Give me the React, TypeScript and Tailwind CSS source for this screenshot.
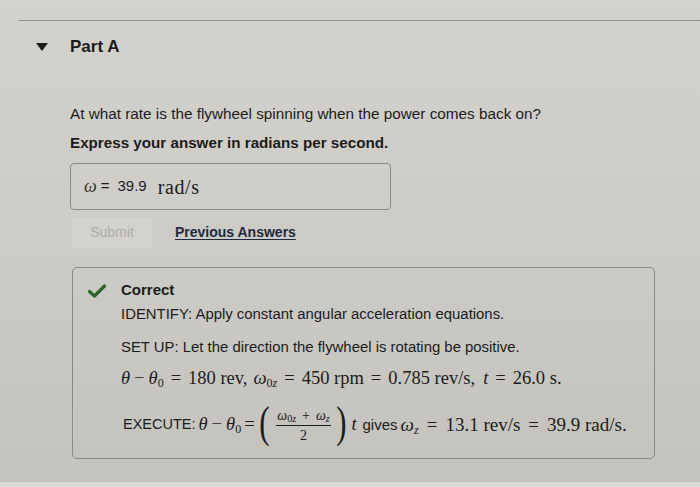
import React from "react";

const sans = { fontFamily: '"Liberation Sans", Arial, sans-serif' };
const serif = { fontFamily: '"Liberation Serif", "DejaVu Serif", serif' };

function M({ children }: { children: React.ReactNode }) {
  return <span className="italic">{children}</span>;
}
function Eq() {
  return <span className="mx-[7px]">=</span>;
}
function Minus() {
  return <span className="mx-[4px]">−</span>;
}

export default function App() {
  return (
    <div className="w-[700px] h-[487px] overflow-hidden text-[#1c1c1c] relative" style={sans}>
      <div className="flex flex-col h-full bg-gradient-to-b from-[#d4d2cd] via-[#cdcbc6] to-[#c3c2bc]">
        <div className="h-[20px] shrink-0" />
        <div className="ml-[18px] h-[1px] bg-[#8f8e8a] shrink-0" />
        <div className="flex items-center h-[48px] pt-[4px] shrink-0">
          <svg width="12" height="8" viewBox="0 0 12 8" className="ml-[36px] mr-[22px]">
            <polygon points="0,0 12,0 6,8" fill="#1c1c1c" />
          </svg>
          <span className="font-bold text-[17px]">Part A</span>
        </div>
        <div className="pl-[70px] pt-[36px] flex flex-col">
          <div className="text-[15.3px] leading-[18px]">At what rate is the flywheel spinning when the power comes back on?</div>
          <div className="text-[15.2px] leading-[18px] font-bold mt-[11px]">Express your answer in radians per second.</div>
          <div className="mt-[11px] w-[321px] h-[47px] border border-[#8a8985] rounded-[4px] flex items-center pl-[13px] text-[15px] bg-[#d0cec9]">
            <span className="italic text-[18px] text-[#333]" style={serif}>ω</span>
            <span className="ml-[4px] text-[15px]">=</span>
            <span className="ml-[8px]">39.9</span>
            <span className="ml-[11px] text-[20px] tracking-[0.6px]" style={serif}>rad/s</span>
          </div>
          <div className="flex items-center mt-[7px] pl-[2px]">
            <div className="w-[80px] h-[31px] bg-[#d3d2cd] text-[#adaca7] text-[14px] flex items-center justify-center">Submit</div>
            <span className="ml-[23px] font-bold text-[14px] underline underline-offset-2 text-[#1f2a40]">Previous Answers</span>
          </div>
          <div className="mt-[19px] ml-[2px] w-[583px] h-[192px] border border-[#8a8985] rounded-[5px] flex items-start pt-[13px]">
            <svg width="18" height="14" viewBox="0 0 18 14" className="ml-[15px] mt-[3px] shrink-0">
              <path d="M1.5 7.5 L6.5 12 L16.5 2" stroke="#2e632e" strokeWidth="3.2" fill="none" strokeLinecap="round" strokeLinejoin="round" />
            </svg>
            <div className="ml-[15px] flex flex-col text-[15px]">
              <div className="font-bold text-[15px] leading-[17px]">Correct</div>
              <div className="leading-[17px] mt-[8px] text-[14.9px]">IDENTIFY: Apply constant angular acceleration equations.</div>
              <div className="leading-[17px] mt-[16px] text-[14.9px]">SET UP: Let the direction the flywheel is rotating be positive.</div>
              <div className="leading-[20px] mt-[12px] text-[18.5px] whitespace-nowrap" style={serif}>
                <M>θ</M><Minus /><M>θ</M><sub className="text-[12px]">0</sub><Eq />180 rev,<span className="ml-[6px]" /><M>ω</M><sub className="text-[12px]">0<M>z</M></sub><Eq />450 rpm<Eq />0.785 rev/s,<span className="ml-[8px]" /><M>t</M><Eq />26.0 s.
              </div>
              <div className="flex items-center mt-[16px] whitespace-nowrap h-[42px]">
                <span className="text-[14.5px] ml-[2px]">EXECUTE:</span>
                <span className="text-[18.5px] ml-[3px]" style={serif}><M>θ</M><Minus /><M>θ</M><sub className="text-[12px]">0</sub><span className="ml-[3px]">=</span></span>
                <span className="text-[44px] leading-[44px] ml-[2px] scale-x-[0.7] inline-block -mt-[5px]" style={serif}>(</span>
                <span className="inline-flex flex-col items-center text-[14px] leading-[15px] ml-[5px] mr-[3px]" style={serif}>
                  <span className="px-[1px]"><M>ω</M><sub className="text-[10px]">0<M>z</M></sub><span className="mx-[6px]">+</span><M>ω</M><sub className="text-[10px]"><M>z</M></sub></span>
                  <span className="w-full h-[1px] bg-[#1c1c1c] my-[2px]" />
                  <span>2</span>
                </span>
                <span className="text-[44px] leading-[44px] scale-x-[0.7] inline-block -mt-[5px]" style={serif}>)</span>
                <span className="text-[18.5px] ml-[3px]" style={serif}><M>t</M></span>
                <span className="text-[15px] ml-[6px]">gives</span>
                <span className="text-[19px] ml-[3px]" style={serif}><M>ω</M><sub className="text-[12px]"><M>z</M></sub><span className="mx-[8px]">=</span>13.1 rev/s<span className="mx-[8px]">=</span>39.9 rad/s.</span>
              </div>
            </div>
          </div>
        </div>
      </div>
      <div className="absolute left-0 right-0 bottom-0 h-[5px] bg-[#dbd9d3]" />
    </div>
  );
}
